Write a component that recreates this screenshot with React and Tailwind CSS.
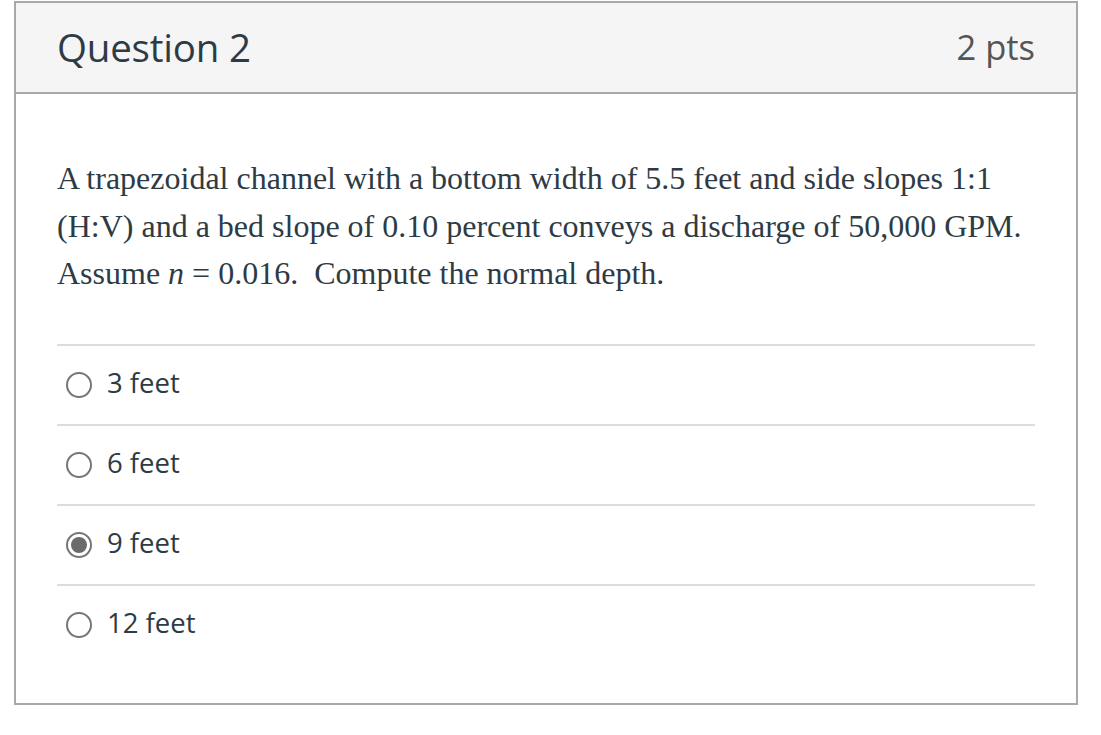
export default function App() {
  const options = [
    { label: "3 feet", checked: false },
    { label: "6 feet", checked: false },
    { label: "9 feet", checked: true },
    { label: "12 feet", checked: false },
  ];

  return (
    <div className="min-h-screen bg-white pt-px pl-[14px] w-[1101px] h-[735px]">
      {/* CARD */}
      <div className="w-[1064px] border-2 border-[#a8a8a8] bg-white">
        {/* HEADER */}
        <div className="h-[91px] bg-[#f5f5f5] border-b-2 border-[#a8a8a8] flex items-center justify-between px-[41px] font-['Open_Sans',sans-serif]">
          <h2 className="text-[38.5px] text-[#2d3b45] leading-none tracking-[-0.2px]">Question 2</h2>
          <span className="text-[34.5px] text-[#555] leading-none">2 pts</span>
        </div>

        {/* BODY */}
        <div className="px-[41px] pt-[61px] pb-[39px]">
          <p className="font-['Liberation_Serif',serif] text-[32px] leading-[47.5px] text-[#2d3b45]">
            A trapezoidal channel with a bottom width of 5.5 feet and side slopes 1:1
            <br />
            (H:V) and a bed slope of 0.10 percent conveys a discharge of 50,000 GPM.
            <br />
            Assume <i>n</i> = 0.016.&nbsp; Compute the normal depth.
          </p>

          <div className="mt-[46px]">
            {options.map((opt) => (
              <div
                key={opt.label}
                className="h-[80px] border-t-2 border-[#dddddd] flex items-center font-['Open_Sans',sans-serif]"
              >
                <span className="ml-[9px] w-[26px] h-[26px] rounded-full border-2 border-[#767676] flex items-center justify-center">
                  {opt.checked && <span className="w-[16px] h-[16px] rounded-full bg-[#6b6b6b]" />}
                </span>
                <span className="ml-[15px] mb-[4px] text-[27.5px] text-[#2d3b45] leading-none">{opt.label}</span>
              </div>
            ))}
          </div>
        </div>
      </div>
    </div>
  );
}
